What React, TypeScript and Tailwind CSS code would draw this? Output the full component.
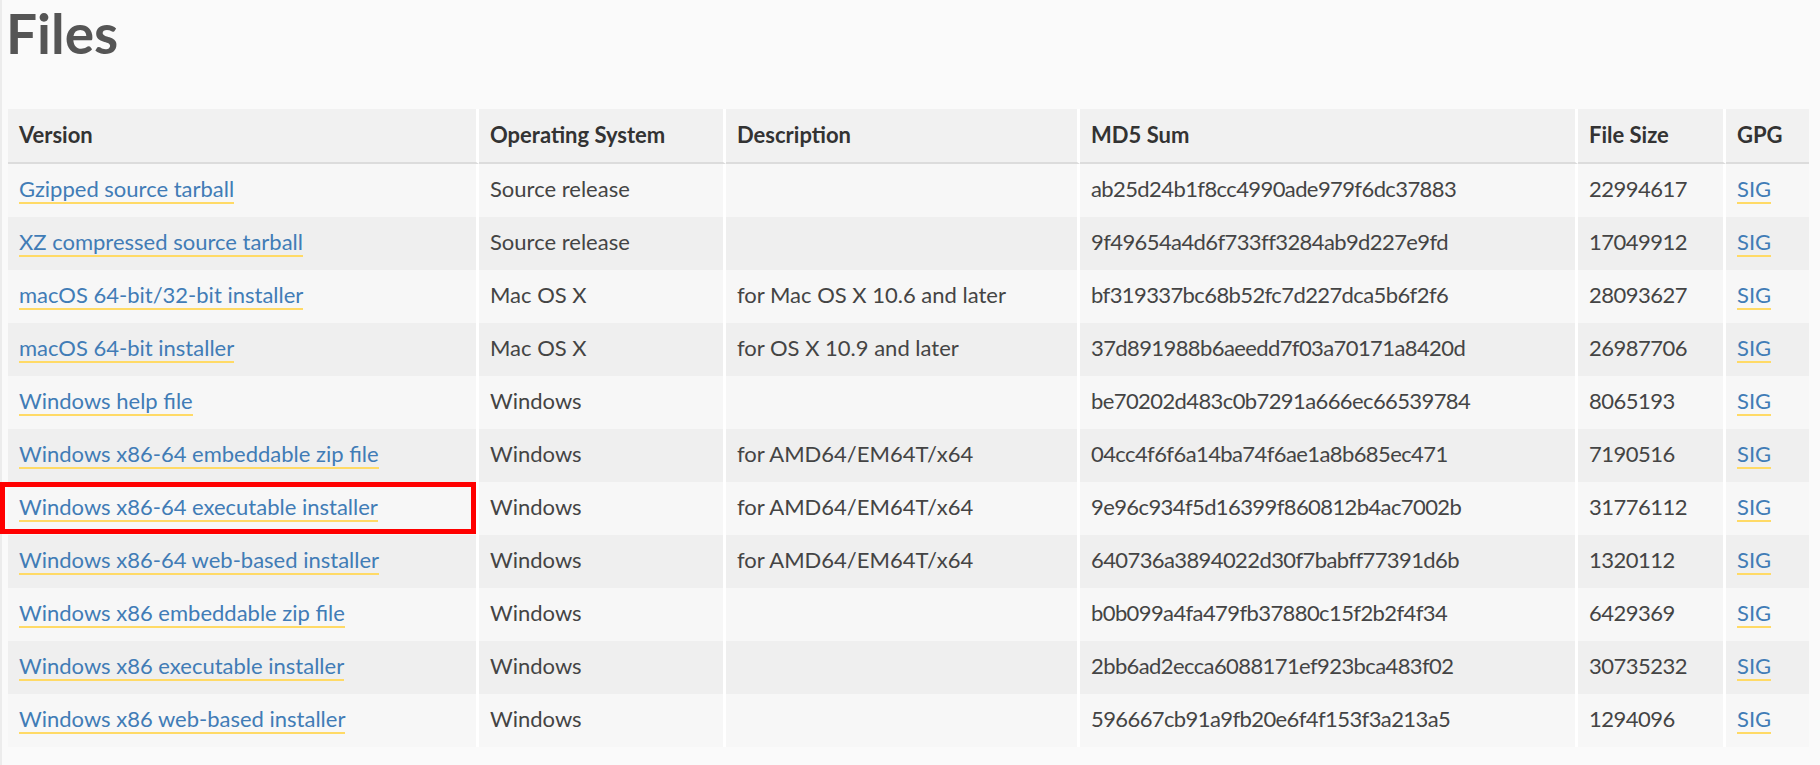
const rows = [
  ['Gzipped source tarball', 'Source release', '', 'ab25d24b1f8cc4990ade979f6dc37883', '22994617'],
  ['XZ compressed source tarball', 'Source release', '', '9f49654a4d6f733ff3284ab9d227e9fd', '17049912'],
  ['macOS 64-bit/32-bit installer', 'Mac OS X', 'for Mac OS X 10.6 and later', 'bf319337bc68b52fc7d227dca5b6f2f6', '28093627'],
  ['macOS 64-bit installer', 'Mac OS X', 'for OS X 10.9 and later', '37d891988b6aeedd7f03a70171a8420d', '26987706'],
  ['Windows help file', 'Windows', '', 'be70202d483c0b7291a666ec66539784', '8065193'],
  ['Windows x86-64 embeddable zip file', 'Windows', 'for AMD64/EM64T/x64', '04cc4f6f6a14ba74f6ae1a8b685ec471', '7190516'],
  ['Windows x86-64 executable installer', 'Windows', 'for AMD64/EM64T/x64', '9e96c934f5d16399f860812b4ac7002b', '31776112'],
  ['Windows x86-64 web-based installer', 'Windows', 'for AMD64/EM64T/x64', '640736a3894022d30f7babff77391d6b', '1320112'],
  ['Windows x86 embeddable zip file', 'Windows', '', 'b0b099a4fa479fb37880c15f2b2f4f34', '6429369'],
  ['Windows x86 executable installer', 'Windows', '', '2bb6ad2ecca6088171ef923bca483f02', '30735232'],
  ['Windows x86 web-based installer', 'Windows', '', '596667cb91a9fb20e6f4f153f3a213a5', '1294096'],
]

const HIGHLIGHT = 6

const link = 'text-[#417cb6] border-b-2 border-[#ffda66]'
const cell = 'h-[53px] pl-[11px] pb-[5px] align-middle border-r-[3px] border-white'
const head = 'h-[55px] pl-[11px] pb-[3px] text-left font-bold border-r-[3px] border-b-2 border-r-white border-b-[#dcdcdc]'

export default function App() {
  return (
    <div className="min-h-screen bg-[#fafafa] border-l-2 border-[#ececec] pl-[6px] font-['Lato','Noto_Sans',sans-serif] text-[22px] text-[#444]">
      <h1 className="pt-[6px] -ml-[2px] h-[109px] text-[55px] leading-none font-bold text-[#555]">Files</h1>

      <table className="table-fixed w-[1801px] border-separate border-spacing-0">
        <thead>
          <tr className="bg-[#f1f1f1] text-[#333]">
            <th className={`w-[471px] ${head}`}>Version</th>
            <th className={`w-[247px] ${head}`}>Operating System</th>
            <th className={`w-[354px] ${head}`}>Description</th>
            <th className={`w-[498px] ${head}`}>MD5 Sum</th>
            <th className={`w-[148px] ${head}`}>File Size</th>
            <th className="w-[83px] h-[55px] pl-[11px] pb-[3px] text-left font-bold border-b-2 border-b-[#dcdcdc]">GPG</th>
          </tr>
        </thead>
        <tbody>
          {rows.map((r, i) => (
            <tr key={i} className={i % 2 === 0 ? 'bg-[#f7f7f7]' : 'bg-[#efefef]'}>
              <td className={`${cell} relative`}>
                <a href="#" className={link}>{r[0]}</a>
                {i === HIGHLIGHT && (
                  <div className="absolute -left-[8px] top-0 w-[476px] h-[52px] border-[5px] border-[#ff0000] pointer-events-none" />
                )}
              </td>
              <td className={cell}>{r[1]}</td>
              <td className={cell}>{r[2]}</td>
              <td className={`${cell} tracking-[-0.6px]`}>{r[3]}</td>
              <td className={`${cell} tracking-[-0.5px]`}>{r[4]}</td>
              <td className="h-[53px] pl-[11px] pb-[5px] align-middle">
                <a href="#" className={link}>SIG</a>
              </td>
            </tr>
          ))}
        </tbody>
      </table>
    </div>
  )
}
